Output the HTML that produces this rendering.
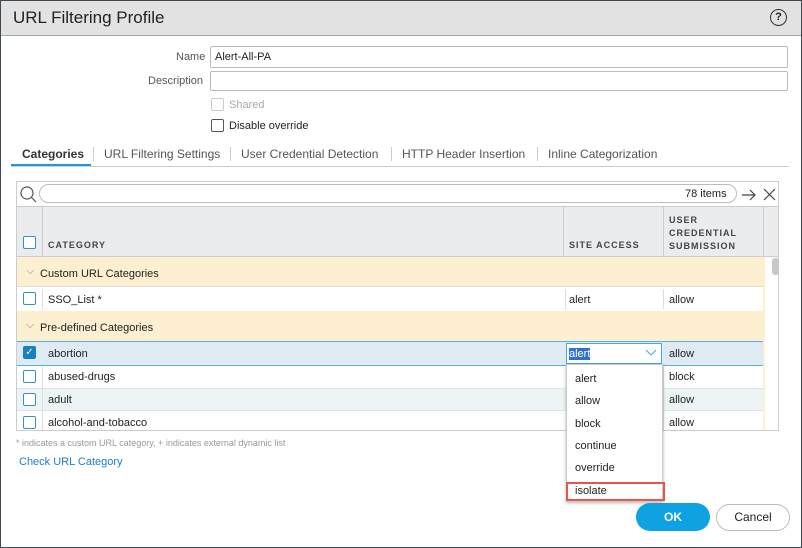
<!DOCTYPE html>
<html><head><style>
*{box-sizing:border-box;margin:0;padding:0}
body{width:802px;height:548px;background:#fff;font-family:"Liberation Sans",sans-serif;color:#222;position:relative;overflow:hidden;font-size:11px}
.a{position:absolute}
.cb{position:absolute;width:13px;height:13px;border:1.5px solid #3a8fc0;border-radius:2px;background:#fff}
.t{position:absolute;font-size:11px;white-space:nowrap}
.hdr{font-size:9px;letter-spacing:1px;font-weight:bold;color:#444}
</style></head><body>
<div class="a" style="left:0;top:0;width:802px;height:548px;border:1px solid #3c4a54"></div>
<div class="a" style="left:1px;top:1px;width:800px;height:35px;background:#e2e2e2;border-bottom:1px solid #9aa"></div>
<div class="t" style="left:13px;top:8px;font-size:17px;color:#222">URL Filtering Profile</div>
<div class="a" style="left:770px;top:9px;width:17px;height:17px;border:1.5px solid #333;border-radius:50%;font-size:11px;text-align:center;line-height:14px;font-weight:bold">?</div>

<div class="t" style="left:176px;top:51px;color:#555">Name</div>
<div class="a" style="left:210px;top:46px;width:578px;height:22px;border:1px solid #bbb;border-radius:2px"></div>
<div class="t" style="left:215px;top:51px">Alert-All-PA</div>
<div class="t" style="left:148px;top:75px;color:#555">Description</div>
<div class="a" style="left:210px;top:71px;width:578px;height:20px;border:1px solid #bbb;border-radius:2px"></div>
<div class="cb" style="left:211px;top:98px;border:1px solid #ccc"></div>
<div class="t" style="left:229px;top:99px;color:#aaa">Shared</div>
<div class="cb" style="left:211px;top:119px;border:1px solid #555"></div>
<div class="t" style="left:229px;top:120px">Disable override</div>

<div class="t" style="left:22px;top:147px;font-size:12px;font-weight:bold;color:#333">Categories</div>
<div class="a" style="left:11px;top:164px;width:80px;height:2px;background:#1a9ad6"></div>
<div class="a" style="left:11px;top:166px;width:778px;height:1px;background:#ccc"></div>
<div class="t" style="left:104px;top:147px;font-size:12px;color:#555">URL Filtering Settings</div>
<div class="t" style="left:241px;top:147px;font-size:12px;color:#555">User Credential Detection</div>
<div class="t" style="left:402px;top:147px;font-size:12px;color:#555">HTTP Header Insertion</div>
<div class="t" style="left:548px;top:147px;font-size:12px;color:#555">Inline Categorization</div>
<div class="a" style="left:93px;top:147px;width:1px;height:14px;background:#ccc"></div>
<div class="a" style="left:230px;top:147px;width:1px;height:14px;background:#ccc"></div>
<div class="a" style="left:391px;top:147px;width:1px;height:14px;background:#ccc"></div>
<div class="a" style="left:537px;top:147px;width:1px;height:14px;background:#ccc"></div>

<div class="a" style="left:16px;top:181px;width:763px;height:250px;border:1px solid #ccc"></div>
<svg class="a" style="left:19px;top:185px" width="20" height="20"><circle cx="8" cy="8" r="6" fill="none" stroke="#555" stroke-width="1.2"/><line x1="12" y1="12" x2="17" y2="17" stroke="#555" stroke-width="1.2"/></svg>
<div class="a" style="left:39px;top:184px;width:698px;height:19px;border:1px solid #bbb;border-radius:10px"></div>
<div class="t" style="left:685px;top:188px">78 items</div>
<svg class="a" style="left:740px;top:186px" width="40" height="18"><path d="M2 9H15M10 4L15 9L10 14" fill="none" stroke="#444" stroke-width="1.2"/><path d="M24 3L35 14M35 3L24 14" stroke="#444" stroke-width="1.2"/></svg>

<div class="a" style="left:17px;top:206px;width:761px;height:51px;background:#ebeced;border-top:1px solid #ccc;border-bottom:1px solid #ccc"></div>
<div class="a" style="left:42px;top:207px;width:1px;height:50px;background:#ccc"></div>
<div class="a" style="left:563px;top:207px;width:1px;height:50px;background:#ccc"></div>
<div class="a" style="left:663px;top:207px;width:1px;height:50px;background:#ccc"></div>
<div class="a" style="left:763px;top:207px;width:1px;height:50px;background:#ccc"></div>
<div class="cb" style="left:23px;top:236px"></div>
<div class="t hdr" style="left:48px;top:240px">CATEGORY</div>
<div class="t hdr" style="left:569px;top:240px">SITE ACCESS</div>
<div class="t hdr" style="left:669px;top:214px;line-height:13px">USER<br>CREDENTIAL<br>SUBMISSION</div>

<div class="a" style="left:17px;top:257px;width:746px;height:173px;background:#fff"></div>
<div class="a" style="left:763px;top:257px;width:15px;height:173px;background:#fdf0d0"></div>
<div class="a" style="left:765px;top:257px;width:13px;height:173px;background:#fff"></div>
<div class="a" style="left:772px;top:258px;width:7px;height:17px;background:#c8c8c8;border-radius:3px"></div>

<div class="a" style="left:17px;top:257px;width:746px;height:30px;background:#fdf0d0;border-bottom:1px solid #ddd"></div>
<div class="t" style="left:26px;top:265px;color:#888">⌵</div><div class="t" style="left:40px;top:268px">Custom URL Categories</div>
<div class="cb" style="left:23px;top:292px"></div>
<div class="a" style="left:42px;top:289px;width:1px;height:20px;background:#ddd"></div>
<div class="t" style="left:48px;top:294px">SSO_List *</div>
<div class="a" style="left:565px;top:289px;width:1px;height:20px;background:#ddd"></div>
<div class="t" style="left:569px;top:294px">alert</div>
<div class="a" style="left:663px;top:289px;width:1px;height:20px;background:#ddd"></div>
<div class="t" style="left:669px;top:294px">allow</div>
<div class="a" style="left:17px;top:311px;width:746px;height:30px;background:#fdf0d0"></div>
<div class="t" style="left:26px;top:319px;color:#888">⌵</div><div class="t" style="left:40px;top:322px">Pre-defined Categories</div>

<div class="a" style="left:17px;top:341px;width:746px;height:25px;background:#deebf3;border-top:1px solid #5aaedc;border-bottom:1px solid #5aaedc"></div>
<div class="a" style="left:23px;top:346px;width:13px;height:13px;background:#1a7fc0;border-radius:2px;color:#fff;font-size:10px;text-align:center;line-height:13px">✓</div>
<div class="t" style="left:48px;top:348px">abortion</div>
<div class="a" style="left:566px;top:343px;width:96px;height:21px;border:1px solid #4aa8de;background:#fff"></div>
<div class="t" style="left:569px;top:348px;background:#2f6fd0;color:#fff">alert</div>
<svg class="a" style="left:645px;top:349px" width="12" height="8"><path d="M1 1L6 6L11 1" fill="none" stroke="#4aa8de"/></svg>
<div class="t" style="left:669px;top:348px">allow</div>

<div class="cb" style="left:23px;top:370px"></div><div class="t" style="left:48px;top:371px">abused-drugs</div>
<div class="t" style="left:669px;top:371px">block</div>
<div class="a" style="left:17px;top:388px;width:746px;height:23px;background:#edf4f6;border-top:1px solid #e4e4e4;border-bottom:1px solid #e4e4e4"></div>
<div class="cb" style="left:23px;top:393px"></div><div class="t" style="left:48px;top:394px">adult</div>
<div class="t" style="left:669px;top:394px">allow</div>
<div class="cb" style="left:23px;top:416px"></div><div class="t" style="left:48px;top:417px">alcohol-and-tobacco</div>
<div class="t" style="left:669px;top:417px">allow</div>
<div class="a" style="left:42px;top:367px;width:1px;height:63px;background:#ddd"></div>
<div class="a" style="left:663px;top:367px;width:1px;height:63px;background:#ddd"></div>

<div class="a" style="left:566px;top:364px;width:97px;height:138px;background:#fff;border:1px solid #ccc;box-shadow:0 1px 3px rgba(0,0,0,.3)"></div>
<div class="t" style="left:575px;top:373px">alert</div>
<div class="t" style="left:575px;top:395px">allow</div>
<div class="t" style="left:575px;top:418px">block</div>
<div class="t" style="left:575px;top:440px">continue</div>
<div class="t" style="left:575px;top:462px">override</div>
<div class="t" style="left:575px;top:485px">isolate</div>
<div class="a" style="left:566px;top:482px;width:99px;height:19px;border:2px solid #e8554a"></div>

<div class="t" style="left:16px;top:438px;font-size:9px;color:#999">* indicates a custom URL category, + indicates external dynamic list</div>
<div class="t" style="left:19px;top:456px;color:#1a7fd0">Check URL Category</div>

<div class="a" style="left:636px;top:503px;width:74px;height:28px;background:#0ea2e3;border-radius:14px;color:#fff;text-align:center;line-height:28px;font-size:12px;font-weight:bold">OK</div>
<div class="a" style="left:716px;top:504px;width:74px;height:27px;border:1px solid #bbb;border-radius:14px;text-align:center;line-height:25px;font-size:12px">Cancel</div>
</body></html>
